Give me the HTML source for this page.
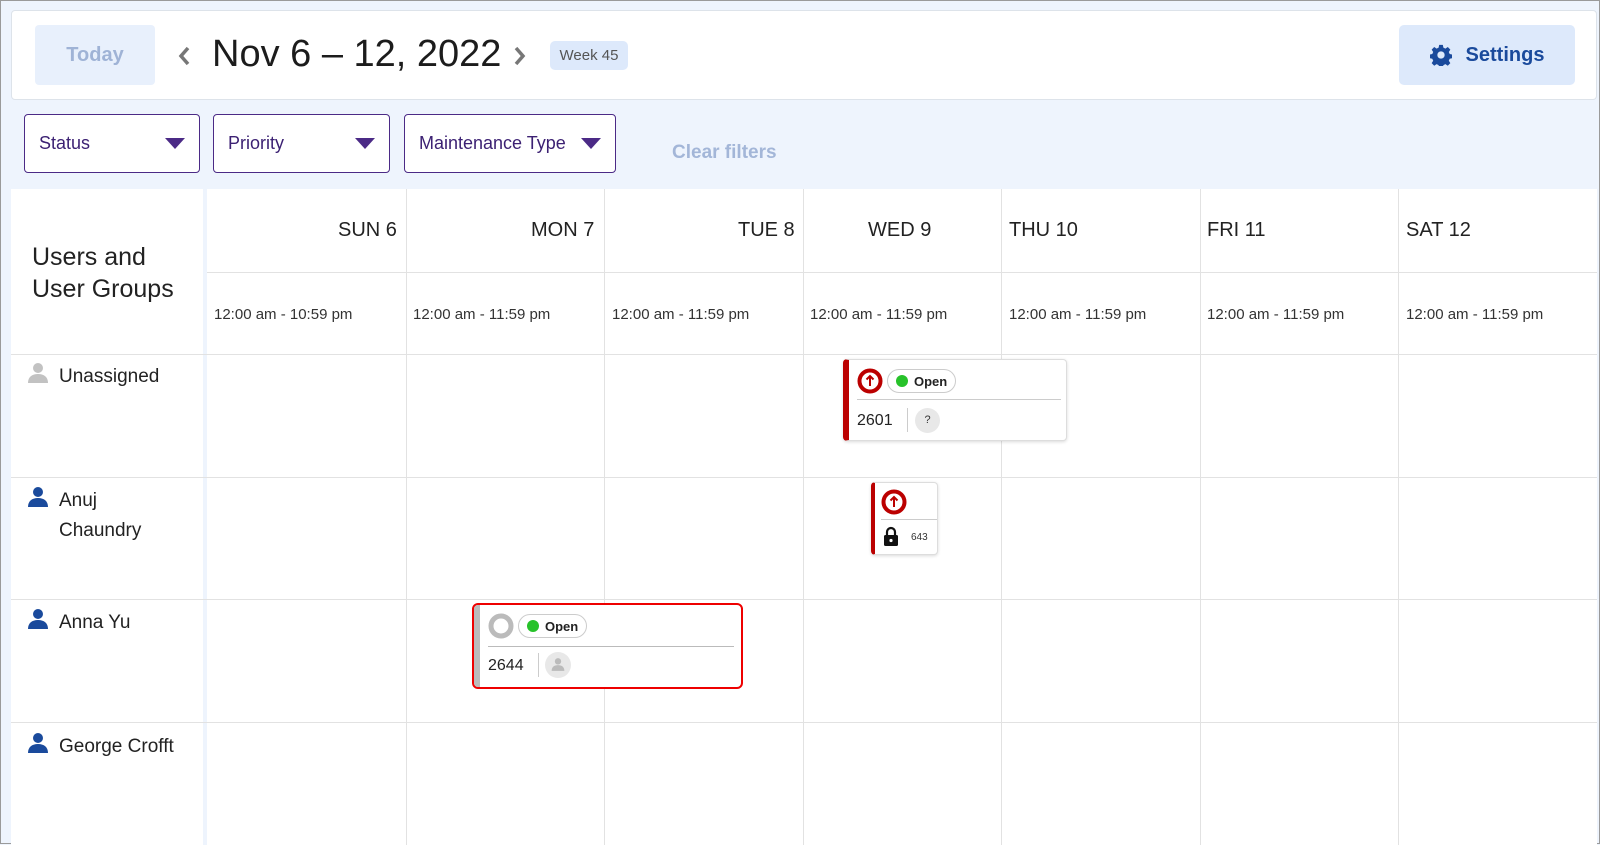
<!DOCTYPE html>
<html><head><style>
*{box-sizing:border-box;margin:0;padding:0}
body{width:1600px;height:844px;overflow:hidden;background:#eef4fd;font-family:"Liberation Sans",sans-serif;position:relative;border:1px solid #9a9a9a}
.abs{position:absolute}
.hdr{left:10px;top:9px;width:1586px;height:90px;background:#fff;border:1px solid #dde3ea;border-radius:4px}
.today{left:34px;top:24px;width:120px;height:60px;background:#e8f0fc;border-radius:4px;color:#9fb3d6;font-size:20px;font-weight:bold;display:flex;align-items:center;justify-content:center}
.title{left:211px;top:32px;font-size:38px;color:#1c1c1c}
.week{left:549px;top:40px;width:78px;height:29px;background:#dde9fb;border-radius:5px;color:#555;font-size:15px;display:flex;align-items:center;justify-content:center}
.set{left:1398px;top:24px;width:176px;height:60px;background:#dde9fb;border-radius:5px;color:#1a4a9c;font-size:20px;font-weight:bold;display:flex;align-items:center;justify-content:center;gap:14px}
.flt{top:113px;height:59px;background:#fff;border:1.5px solid #4b2a86;border-radius:4px;color:#3c2173;font-size:18px;display:flex;align-items:center;padding:0 14px;justify-content:space-between}
.tri{width:0;height:0;border-left:10px solid transparent;border-right:10px solid transparent;border-top:11px solid #4b2a86}
.grid{left:10px;top:188px;width:1586px;height:656px;background:#fff}
.vl{position:absolute;top:188px;height:656px;width:1px;background:#e2e2e2}
.hl{position:absolute;left:206px;width:1390px;height:1px;background:#e2e2e2}
.day{position:absolute;top:218px;font-size:20px;color:#222}
.tm{position:absolute;top:305px;font-size:15px;color:#333}
.user{position:absolute;left:26px;font-size:19px;color:#222;display:flex;gap:10px;line-height:30px}
.card{position:absolute;background:#fff;border:1px solid #ddd;border-radius:4px;box-shadow:0 1px 3px rgba(0,0,0,.15)}
.pill{position:absolute;height:24px;border:1.5px solid #ccc;border-radius:12px;font-size:13px;font-weight:bold;color:#222;display:flex;align-items:center;gap:6px;padding:0 8px}
.dot{width:12px;height:12px;border-radius:50%;background:#27c22a}
</style></head><body>
<div class="abs hdr"></div>
<div class="abs today">Today</div>
<svg class="abs" style="left:176px;top:45px" width="14" height="20" viewBox="0 0 14 20"><path d="M11 2L4 10l7 8" stroke="#777" stroke-width="3.5" fill="none"/></svg>
<div class="abs title">Nov 6 – 12, 2022</div>
<svg class="abs" style="left:512px;top:45px" width="14" height="20" viewBox="0 0 14 20"><path d="M3 2l7 8-7 8" stroke="#777" stroke-width="3.5" fill="none"/></svg>
<div class="abs week">Week 45</div>
<div class="abs set"><svg width="22" height="22" viewBox="0 0 24 24"><path fill="#1a4a9c" d="M10 1h4l.6 3 2.2 1 2.6-1.7 2.8 2.8-1.7 2.6 1 2.2 3 .6v4l-3 .6-1 2.2 1.7 2.6-2.8 2.8-2.6-1.7-2.2 1-.6 3h-4l-.6-3-2.2-1-2.6 1.7-2.8-2.8 1.7-2.6-1-2.2-3-.6v-4l3-.6 1-2.2-1.7-2.6 2.8-2.8 2.6 1.7 2.2-1zM12 8a4 4 0 100 8 4 4 0 000-8z"/></svg>Settings</div>
<div class="abs flt" style="left:23px;width:176px">Status<div class="tri"></div></div>
<div class="abs flt" style="left:212px;width:177px">Priority<div class="tri"></div></div>
<div class="abs flt" style="left:403px;width:212px">Maintenance Type<div class="tri"></div></div>
<div class="abs" style="left:671px;top:141px;font-size:19px;font-weight:bold;color:#a3b6d8">Clear filters</div>
<div class="abs grid"></div>
<div class="abs" style="left:202px;top:188px;width:4px;height:656px;background:#eef4fd"></div>
<div class="vl" style="left:405px"></div><div class="vl" style="left:603px"></div><div class="vl" style="left:802px"></div><div class="vl" style="left:1000px"></div><div class="vl" style="left:1199px"></div><div class="vl" style="left:1397px"></div>
<div class="hl" style="top:271px"></div>
<div class="hl" style="top:353px;left:10px;width:1586px"></div><div class="hl" style="top:476px;left:10px;width:1586px"></div><div class="hl" style="top:598px;left:10px;width:1586px"></div><div class="hl" style="top:721px;left:10px;width:1586px"></div>
<div class="abs" style="left:31px;top:240px;font-size:25px;line-height:32px;color:#222">Users and<br>User Groups</div>
<div class="day" style="left:337px">SUN 6</div>
<div class="day" style="left:530px">MON 7</div>
<div class="day" style="left:737px">TUE 8</div>
<div class="day" style="left:867px">WED 9</div>
<div class="day" style="left:1008px">THU 10</div>
<div class="day" style="left:1206px">FRI 11</div>
<div class="day" style="left:1405px">SAT 12</div>
<div class="tm" style="left:213px">12:00 am - 10:59 pm</div>
<div class="tm" style="left:412px">12:00 am - 11:59 pm</div>
<div class="tm" style="left:611px">12:00 am - 11:59 pm</div>
<div class="tm" style="left:809px">12:00 am - 11:59 pm</div>
<div class="tm" style="left:1008px">12:00 am - 11:59 pm</div>
<div class="tm" style="left:1206px">12:00 am - 11:59 pm</div>
<div class="tm" style="left:1405px">12:00 am - 11:59 pm</div>
<svg width="0" height="0" style="position:absolute"><defs><symbol id="u" viewBox="0 0 22 22"><circle cx="11" cy="6" r="5"/><path d="M1 21c0-6 4-9 10-9s10 3 10 9z"/></symbol></defs></svg>
<div class="user" style="top:361px"><svg width="22" height="22" fill="#c2c2c2"><use href="#u"/></svg>Unassigned</div>
<div class="user" style="top:485px"><svg width="22" height="22" fill="#1a4a9c"><use href="#u"/></svg><span>Anuj<br>Chaundry</span></div>
<div class="user" style="top:607px"><svg width="22" height="22" fill="#1a4a9c"><use href="#u"/></svg>Anna Yu</div>
<div class="user" style="top:731px"><svg width="22" height="22" fill="#1a4a9c"><use href="#u"/></svg>George Crofft</div>
<div class="card" style="left:842px;top:358px;width:224px;height:82px;border-left:6px solid #b00">
<svg class="abs" style="left:8px;top:8px" width="26" height="26" viewBox="0 0 26 26"><circle cx="13" cy="13" r="10.5" fill="#fff" stroke="#b00" stroke-width="4"/><path d="M13 18V8M9.5 11.5L13 8l3.5 3.5" stroke="#b00" stroke-width="2" fill="none"/></svg>
<div class="pill" style="left:38px;top:9px"><div class="dot"></div>Open</div>
<div class="abs" style="left:8px;top:39px;width:204px;height:1px;background:#ccc"></div>
<div class="abs" style="left:8px;top:52px;font-size:16px;color:#222">2601</div>
<div class="abs" style="left:58px;top:48px;width:1px;height:24px;background:#ccc"></div>
<div class="abs" style="left:66px;top:48px;width:25px;height:25px;border-radius:50%;background:#e8e8e8;font-size:11px;text-align:center;line-height:25px;color:#333">?</div>
</div>
<div class="card" style="left:870px;top:481px;width:67px;height:73px;border-left:4px solid #b00">
<svg class="abs" style="left:6px;top:6px" width="26" height="26" viewBox="0 0 26 26"><circle cx="13" cy="13" r="10.5" fill="#fff" stroke="#b00" stroke-width="4"/><path d="M13 18V8M9.5 11.5L13 8l3.5 3.5" stroke="#b00" stroke-width="2" fill="none"/></svg>
<div class="abs" style="left:6px;top:36px;width:56px;height:1px;background:#ccc"></div>
<svg class="abs" style="left:8px;top:43px" width="16" height="20" viewBox="0 0 16 20"><path d="M4 9V6a4 4 0 018 0v3" stroke="#111" stroke-width="2.2" fill="none"/><rect x="1" y="9" width="14" height="11" rx="1.5" fill="#111"/><circle cx="8" cy="14.5" r="1.6" fill="#fff"/></svg>
<div class="abs" style="left:36px;top:49px;font-size:10px;color:#333">643</div>
</div>
<div class="card" style="left:471px;top:602px;width:271px;height:86px;border:2px solid #e00;border-radius:6px;box-shadow:none">
<div class="abs" style="left:0;top:0;width:6px;height:82px;background:#bbb;border-radius:4px 0 0 4px"></div>
<svg class="abs" style="left:14px;top:8px" width="26" height="26" viewBox="0 0 26 26"><circle cx="13" cy="13" r="10" fill="#fff" stroke="#bbb" stroke-width="5"/></svg>
<div class="pill" style="left:44px;top:9px"><div class="dot"></div>Open</div>
<div class="abs" style="left:14px;top:41px;width:246px;height:1px;background:#bbb"></div>
<div class="abs" style="left:14px;top:52px;font-size:16px;color:#222">2644</div>
<div class="abs" style="left:64px;top:48px;width:1px;height:24px;background:#ccc"></div>
<div class="abs" style="left:71px;top:47px;width:26px;height:26px;border-radius:50%;background:#e8e8e8"><svg style="position:absolute;left:6px;top:5px" width="14" height="15" fill="#bbb"><use href="#u"/></svg></div>
</div>
</body></html>
